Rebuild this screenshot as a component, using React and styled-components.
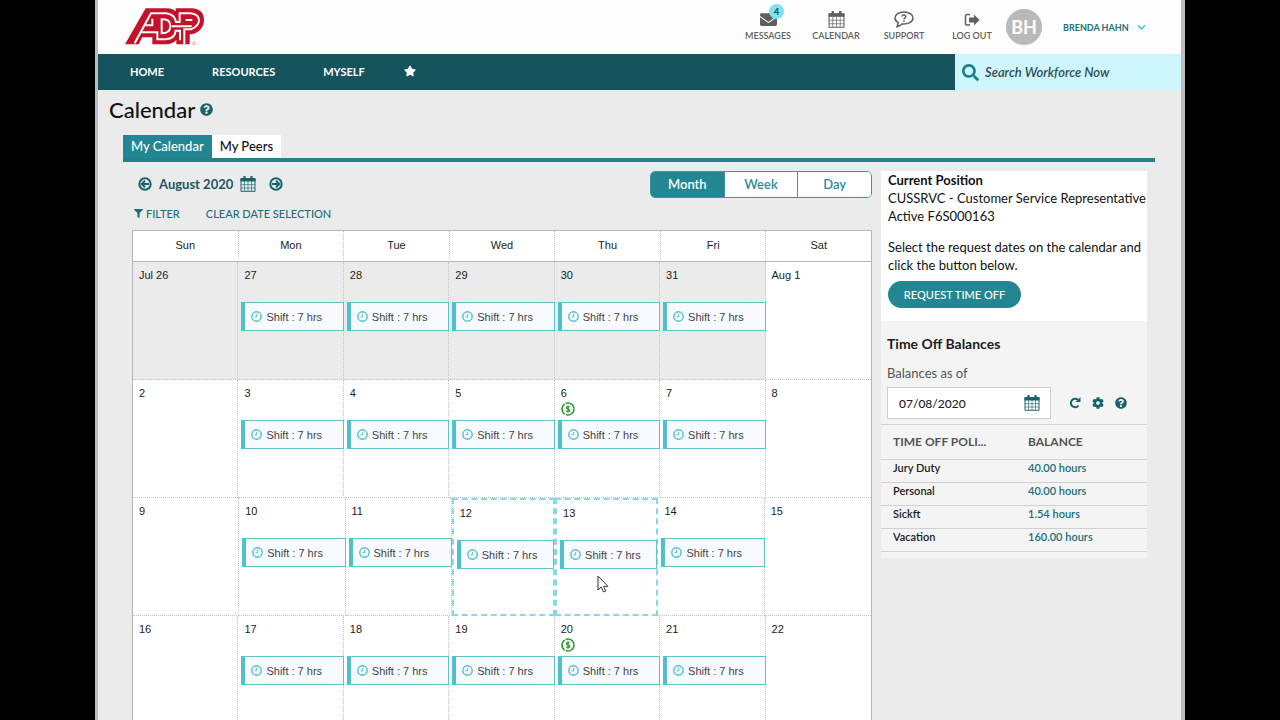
import React from 'react';
import styled, { createGlobalStyle } from 'styled-components';
import {
    FaChevronDown,
    FaCog,
    FaEnvelope,
    FaFilter,
    FaQuestionCircle,
    FaSearch,
    FaStar,
} from 'react-icons/fa';

const GlobalStyle = createGlobalStyle`
    * {
        box-sizing: border-box;
    }

    html {
        scrollbar-width: none;
    }

    body {
        margin: 0;
        background: #000;
        color: #1c1c1c;
        font-family: Lato, 'Open Sans', sans-serif;
    }

    button {
        padding: 0;
        border: 0;
        background: none;
        font-family: inherit;
        cursor: pointer;
    }

    svg {
        display: block;
    }
`;

const Frame = styled.div`
    min-height: 100vh;
    margin: 0 95px;
    border: solid #bdbdbd;
    border-width: 0 4px 0 3px;
    background: #ebebeb;
`;

const Header = styled.header`
    display: flex;
    align-items: center;
    justify-content: space-between;
    height: 54px;
    padding: 0 35px 0 27px;
    background: #fdfdfd;
`;

const HeaderActions = styled.div`
    display: flex;
    align-items: center;
`;

const ActionButton = styled.button`
    position: relative;
    display: flex;
    flex-direction: column;
    align-items: center;
    gap: 2px;
    width: 68px;
    height: 32px;
    color: #5f5f5f;
    font-size: 9px;
    font-weight: 600;
    line-height: 12px;
    white-space: nowrap;
`;

const Badge = styled.span`
    position: absolute;
    top: -7px;
    left: 35px;
    width: 15px;
    height: 15px;
    border-radius: 50%;
    background: #7fe2f1;
    color: #24434a;
    font-size: 9px;
    font-weight: 700;
    line-height: 15px;
`;

const Avatar = styled.div`
    display: flex;
    align-items: center;
    justify-content: center;
    width: 36px;
    height: 36px;
    border-radius: 50%;
    background: #b9b9b9;
    color: #fff;
    font-size: 18px;
    font-weight: 700;
`;

const UserButton = styled.button`
    display: flex;
    align-items: center;
    justify-content: space-between;
    width: 83px;
    margin-left: 21px;
    color: #1d7077;
    font-size: 9px;
    font-weight: 700;
    white-space: nowrap;

    svg {
        color: #3fbdcf;
    }
`;

const Nav = styled.nav`
    display: flex;
    align-items: stretch;
    height: 36px;
    padding-left: 32px;
    background: #15535d;
`;

const NavLink = styled.a`
    display: flex;
    align-items: center;
    margin-right: ${({ $tight }) => ($tight ? '39px' : '48px')};
    padding-bottom: 2px;
    color: #fff;
    font-size: 11px;
    font-weight: 700;
    text-decoration: none;
`;

const Search = styled.label`
    display: flex;
    align-items: center;
    gap: 6px;
    width: 226px;
    margin-left: auto;
    padding-left: 7px;
    background: #cff5fc;
    color: #1d7f8b;
`;

const SearchInput = styled.input`
    flex: 1;
    min-width: 0;
    padding: 0;
    border: 0;
    background: none;
    color: #2f4f57;
    font-family: inherit;
    font-size: 13px;
    font-style: italic;
    font-weight: 600;

    &::placeholder {
        color: #2f4f57;
        opacity: 1;
    }
`;

const TitleRow = styled.div`
    display: flex;
    align-items: center;
    gap: 5px;
    height: 38px;
    margin-bottom: 7px;
    padding-left: 11px;
`;

const Title = styled.h1`
    margin: 0;
    color: #111;
    font-size: 22px;
    font-weight: 500;
`;

const IconButton = styled.button`
    display: flex;
    color: #17646b;
`;

const Main = styled.main`
    margin: 0 26px 0 25px;
`;

const Tabs = styled.div`
    display: flex;
    border-bottom: 4px solid #278089;
`;

const Tab = styled.button`
    height: 23px;
    padding: 0 8px 1px;
    background: ${({ $active }) => ($active ? '#238693' : '#fff')};
    color: ${({ $active }) => ($active ? '#fff' : '#111')};
    font-size: 13px;
    font-weight: 500;
`;

const Columns = styled.div`
    display: flex;
    align-items: flex-start;
    gap: 9px;
    padding: 9px 8px 0 9px;
`;

const CalendarPane = styled.section`
    flex: 1;
    min-width: 0;
`;

const Toolbar = styled.div`
    display: flex;
    align-items: center;
    justify-content: space-between;
    height: 27px;
`;

const MonthPicker = styled.div`
    display: flex;
    align-items: center;
    gap: 7px;
    padding: 0 0 1px 6px;
`;

const MonthName = styled.h2`
    margin: 0;
    color: #1d565d;
    font-size: 13px;
    font-weight: 700;
`;

const NextButton = styled(IconButton)`
    margin-left: 6px;
`;

const Segments = styled.div`
    display: flex;
    width: 222px;
    height: 27px;
    overflow: hidden;
    border: 1px solid #3a94a0;
    border-radius: 5px;
    background: #fff;
`;

const Segment = styled.button`
    flex: 1;
    padding-bottom: 1px;
    background: ${({ $active }) => ($active ? '#238693' : '#fff')};
    color: ${({ $active }) => ($active ? '#fff' : '#2d8b97')};
    font-size: 13px;
    font-weight: 600;

    & + & {
        border-left: 1px solid #3a94a0;
    }
`;

const FilterRow = styled.div`
    display: flex;
    gap: 26px;
    height: 32px;
    padding-left: 2px;
`;

const TextButton = styled.button`
    display: flex;
    align-items: center;
    gap: 3px;
    height: 30px;
    color: #1d6f76;
    font-size: 11px;
    font-weight: 500;
`;

const Month = styled.table`
    display: block;
    border: 1px solid #b5b5b5;
    border-width: 1px 1px 0;
    background: #fff;
    font-family: 'Liberation Sans', Arial, sans-serif;
    font-size: 11px;

    thead,
    tbody {
        display: block;
    }
`;

const Week = styled.tr`
    display: flex;
`;

const DayName = styled.th`
    flex: 1;
    height: 31px;
    padding: 0;
    border-right: 1px dotted #c4c4c4;
    border-bottom: 1px solid #b5b5b5;
    font-weight: 400;
    line-height: 28px;

    &:last-child {
        border-right: 0;
    }
`;

const Day = styled.td`
    position: relative;
    flex: ${({ $selected }) => ($selected ? 103 : 106)} 1 4px;
    min-width: 0;
    height: 118px;
    padding: 0;
    border: ${({ $selected }) => ($selected ? '2px dashed #86d9e5' : '0 dotted #c4c4c4')};
    border-right-width: ${({ $selected }) => ($selected ? '2px' : '1px')};
    border-bottom-width: ${({ $selected }) => ($selected ? '2px' : '1px')};
    background: ${({ $outside }) => ($outside ? '#ebebeb' : '#fff')};

    &:last-child {
        border-right: 0;
    }
`;

const DayHead = styled.div`
    height: 40px;
    padding: 4px 0 0 6px;
    line-height: 18px;
`;

const Shift = styled.button`
    display: flex;
    align-items: center;
    gap: 4px;
    width: calc(100% - 2px);
    height: 29px;
    margin: 0 -1px 0 3px;
    padding-left: 6px;
    border: 1px solid #5fc3ce;
    border-left: 4px solid #4fc0cd;
    background: #f7fbff;
    color: #444;
    font-family: 'Liberation Sans', Arial, sans-serif;
    font-size: 11px;
    white-space: nowrap;
`;

const Pointer = styled.svg`
    position: absolute;
    top: 75px;
    left: 40px;
`;

const Side = styled.aside`
    width: 266px;
    font-size: 13px;
    line-height: 18px;
`;

const PositionPanel = styled.section`
    padding: 0 0 13px 7px;
    background: #fff;
    color: #111;
`;

const PanelHeading = styled.h3`
    margin: 0;
    font-size: 13px;
    font-weight: 700;
`;

const Paragraph = styled.p`
    margin: 0 0 13px;
`;

const Hint = styled.p`
    margin: 0 0 7px;
`;

const RequestButton = styled.button`
    width: 133px;
    height: 27px;
    border-radius: 14px;
    background: #238693;
    color: #fff;
    font-size: 11px;
    font-weight: 500;
`;

const BalancePanel = styled.section`
    padding: 14px 0 6px;
    background: #f4f4f4;
`;

const BalanceHeading = styled.h3`
    margin: 0 0 11px 6px;
    font-size: 14px;
    font-weight: 700;
`;

const DateLabel = styled.label`
    display: block;
    margin: 0 0 5px 6px;
    color: #555;
`;

const DateRow = styled.div`
    display: flex;
    align-items: center;
    gap: 11px;
    padding: 0 0 5px 6px;
`;

const DateField = styled.div`
    display: flex;
    align-items: center;
    width: 164px;
    height: 32px;
    margin-right: 7px;
    padding: 0 10px 0 11px;
    border: 1px solid #ccc;
    background: #fff;
`;

const DateInput = styled.input`
    flex: 1;
    min-width: 0;
    padding: 0;
    border: 0;
    color: #222;
    font-family: inherit;
    font-size: 12px;
    font-weight: 500;
`;

const Balances = styled.table`
    width: 100%;
    border-collapse: collapse;
    table-layout: fixed;
    text-align: left;

    tr {
        border: solid #d0d0d0;
        border-width: 1px 0;
    }

    th,
    td {
        padding: 0 0 0 12px;
    }

    th:last-child,
    td:last-child {
        padding-left: 14px;
    }

    th {
        height: 35px;
        color: #555;
        font-size: 12px;
        font-weight: 700;
    }

    td {
        height: 22px;
        padding-bottom: 6px;
        color: #222;
        font-size: 11px;
        font-weight: 600;
        line-height: 16px;
    }

    td + td {
        color: #1d6f76;
    }
`;

const Logo = () => (
    <svg width="80" height="38" viewBox="0 0 240 114" role="img" aria-label="ADP">
        <path fill="#c4122a" d="M0 109 62 1H126Q142 1 152 10V1H200Q237 3 237 36T200 79H194V109H154V96Q142 109 122 109H82V88H52L41 109Z" />
        <g fill="none" stroke="#fdfdfd" strokeWidth="6">
            <path d="M29 106 78 16H124Q150 20 153 42H164V16H198Q222 20 222 37T198 64H178V109" />
            <path d="M46 73H97V94H122Q150 92 152 68H165V97" />
            <path d="M61 52H82V32" />
            <path d="M110 31V76Q136 76 136 54T110 34" />
            <path d="M140 55H200M182 36H202" />
        </g>
        <circle cx="207" cy="106" r="4" fill="none" stroke="#d77" strokeWidth="2" />
    </svg>
);

const CalendarIcon = ({ size = 16 }) => (
    <svg width={size} height={size} viewBox="0 0 16 16" fill="none" stroke="currentColor">
        <path fill="currentColor" stroke="none" d="M.500 2h15v3.500H.500z" />
        <path d="M1 3v12.300h14V3" />
        <path strokeWidth=".8" opacity=".8" d="M1 8.700h14M1 12h14M4.500 5v10M8 5v10M11.500 5v10" />
        <path strokeWidth="2.200" d="M4.500 0v4M11.500 0v4" />
    </svg>
);

const SupportIcon = () => (
    <svg width="20" height="17" viewBox="0 0 20 17" fill="none" stroke="currentColor" strokeWidth="1.500">
        <path d="M10 1C5 1 1 3.500 1 7c0 2 1.300 3.700 3.300 4.800L3 15.700c2.500-.5 4-1.500 5-2.800 6 .6 11-2 11-5.900C19 3.500 15 1 10 1Z" />
        <path d="M8 5.500c.3-2 4-1.800 3.800.2-.1 1.200-1.800 1.200-1.800 2.800M10 9.500V11" />
    </svg>
);

const LogOutIcon = () => (
    <svg width="16" height="17" viewBox="0 -2 16 17">
        <path fill="none" stroke="currentColor" strokeWidth="1.500" d="M6 1.500H3Q1.500 1.500 1.500 3v7.500Q1.500 12 3 12h3" />
        <path fill="currentColor" d="M5 4.500h5v-3L15.500 7 10 12.500v-3H5z" />
    </svg>
);

const ArrowIcon = ({ flip }) => (
    <svg width="14" height="14" viewBox="0 0 14 14" fill="none" stroke="currentColor" strokeWidth="2">
        <circle cx="7" cy="7" r="5.700" />
        <path d={flip ? 'M3 7h7M7 3.700 10.300 7 7 10.300' : 'M11 7H4M7 3.700 3.700 7 7 10.300'} />
    </svg>
);

const RefreshIcon = () => (
    <svg width="12" height="12" viewBox="0 0 12 12">
        <path fill="none" stroke="currentColor" strokeWidth="2" d="M9.500 8.500A4.200 4.200 0 1 1 9 3" />
        <path fill="currentColor" d="M11.500 0v5h-5z" />
    </svg>
);

const ClockIcon = () => (
    <svg width="11" height="11" viewBox="0 0 11 11" fill="none" stroke="#4fc0cd">
        <circle cx="5.500" cy="5.500" r="4.700" strokeWidth="1.400" />
        <path d="M5.700 2.800v3H3.500" />
    </svg>
);

const PayIcon = () => (
    <svg width="14" height="14" viewBox="0 0 14 14" fill="none" stroke="#2f9a35">
        <circle cx="7" cy="7" r="6" strokeWidth="1.600" strokeDasharray="11.500 1" />
        <path strokeWidth="1.200" d="M8.800 5.200C8 4.300 5.300 4.300 5.300 5.800S8.900 6.900 8.900 8.400 6 9.700 5 8.700M7 3.300v7.400" />
    </svg>
);

const actions = [
    { label: 'MESSAGES', icon: <FaEnvelope size={17} />, badge: 4 },
    { label: 'CALENDAR', icon: <CalendarIcon size={17} /> },
    { label: 'SUPPORT', icon: <SupportIcon /> },
    { label: 'LOG OUT', icon: <LogOutIcon /> },
];

const dayNames = ['Sun', 'Mon', 'Tue', 'Wed', 'Thu', 'Fri', 'Sat'];

const weeks = [
    ['Jul 26', '27', '28', '29', '30', '31', 'Aug 1'],
    ['2', '3', '4', '5', '6', '7', '8'],
    ['9', '10', '11', '12', '13', '14', '15'],
    ['16', '17', '18', '19', '20', '21', '22'],
];

const selectedDays = ['12', '13'];
const payDays = ['6', '20'];

const balances = [
    ['Jury Duty', '40.00 hours'],
    ['Personal', '40.00 hours'],
    ['Sickft', '1.54 hours'],
    ['Vacation', '160.00 hours'],
];

const App = () => (
    <Frame>
        <GlobalStyle />

        <Header>
            <Logo />
            <HeaderActions>
                {actions.map(({ label, icon, badge }) => (
                    <ActionButton key={label}>
                        {icon}
                        {label}
                        {badge && <Badge>{badge}</Badge>}
                    </ActionButton>
                ))}
                <Avatar>BH</Avatar>
                <UserButton>
                    BRENDA HAHN
                    <FaChevronDown size={9} />
                </UserButton>
            </HeaderActions>
        </Header>

        <Nav>
            <NavLink href="#home">HOME</NavLink>
            <NavLink href="#resources">RESOURCES</NavLink>
            <NavLink href="#myself" $tight>MYSELF</NavLink>
            <NavLink href="#favorites" aria-label="Favorites"><FaStar size={12} /></NavLink>
            <Search>
                <FaSearch size={17} />
                <SearchInput type="search" placeholder="Search Workforce Now" aria-label="Search" />
            </Search>
        </Nav>

        <TitleRow>
            <Title>Calendar</Title>
            <IconButton aria-label="Help"><FaQuestionCircle size={13} /></IconButton>
        </TitleRow>

        <Main>
            <Tabs>
                <Tab $active>My Calendar</Tab>
                <Tab>My Peers</Tab>
            </Tabs>

            <Columns>
                <CalendarPane>
                    <Toolbar>
                        <MonthPicker>
                            <IconButton aria-label="Previous month"><ArrowIcon /></IconButton>
                            <MonthName>August 2020</MonthName>
                            <IconButton aria-label="Pick a month"><CalendarIcon /></IconButton>
                            <NextButton aria-label="Next month"><ArrowIcon flip /></NextButton>
                        </MonthPicker>
                        <Segments>
                            <Segment $active>Month</Segment>
                            <Segment>Week</Segment>
                            <Segment>Day</Segment>
                        </Segments>
                    </Toolbar>

                    <FilterRow>
                        <TextButton><FaFilter size={9} />FILTER</TextButton>
                        <TextButton>CLEAR DATE SELECTION</TextButton>
                    </FilterRow>

                    <Month>
                        <thead>
                            <Week>
                                {dayNames.map((name) => <DayName key={name}>{name}</DayName>)}
                            </Week>
                        </thead>
                        <tbody>
                            {weeks.map((week, row) => (
                                <Week key={week[0]}>
                                    {week.map((day, col) => (
                                        <Day
                                            key={day}
                                            $selected={selectedDays.includes(day)}
                                            $outside={row === 0 && col < 6}
                                        >
                                            <DayHead>
                                                {day}
                                                {payDays.includes(day) && <PayIcon />}
                                            </DayHead>
                                            {col > 0 && col < 6 && (
                                                <Shift><ClockIcon />Shift : 7 hrs</Shift>
                                            )}
                                            {day === '13' && (
                                                <Pointer width="12" height="18" viewBox="0 0 12 18">
                                                    <path fill="#fff" stroke="#333" d="M1 1v14l3.300-3 2.200 5 2.300-1-2.200-4.700H11z" />
                                                </Pointer>
                                            )}
                                        </Day>
                                    ))}
                                </Week>
                            ))}
                        </tbody>
                    </Month>
                </CalendarPane>

                <Side>
                    <PositionPanel>
                        <PanelHeading>Current Position</PanelHeading>
                        <Paragraph>
                            CUSSRVC - Customer Service Representative
                            <br />
                            Active F6S000163
                        </Paragraph>
                        <Hint>Select the request dates on the calendar and click the button below.</Hint>
                        <RequestButton>REQUEST TIME OFF</RequestButton>
                    </PositionPanel>

                    <BalancePanel>
                        <BalanceHeading>Time Off Balances</BalanceHeading>
                        <DateLabel htmlFor="as-of">Balances as of</DateLabel>
                        <DateRow>
                            <DateField>
                                <DateInput id="as-of" defaultValue="07/08/2020" />
                                <IconButton aria-label="Pick a date"><CalendarIcon /></IconButton>
                            </DateField>
                            <IconButton aria-label="Refresh"><RefreshIcon /></IconButton>
                            <IconButton aria-label="Settings"><FaCog size={12} /></IconButton>
                            <IconButton aria-label="Help"><FaQuestionCircle size={12} /></IconButton>
                        </DateRow>
                        <Balances>
                            <thead>
                                <tr>
                                    <th>TIME OFF POLI...</th>
                                    <th>BALANCE</th>
                                </tr>
                            </thead>
                            <tbody>
                                {balances.map(([policy, hours]) => (
                                    <tr key={policy}>
                                        <td>{policy}</td>
                                        <td>{hours}</td>
                                    </tr>
                                ))}
                            </tbody>
                        </Balances>
                    </BalancePanel>
                </Side>
            </Columns>
        </Main>
    </Frame>
);

export default App;
